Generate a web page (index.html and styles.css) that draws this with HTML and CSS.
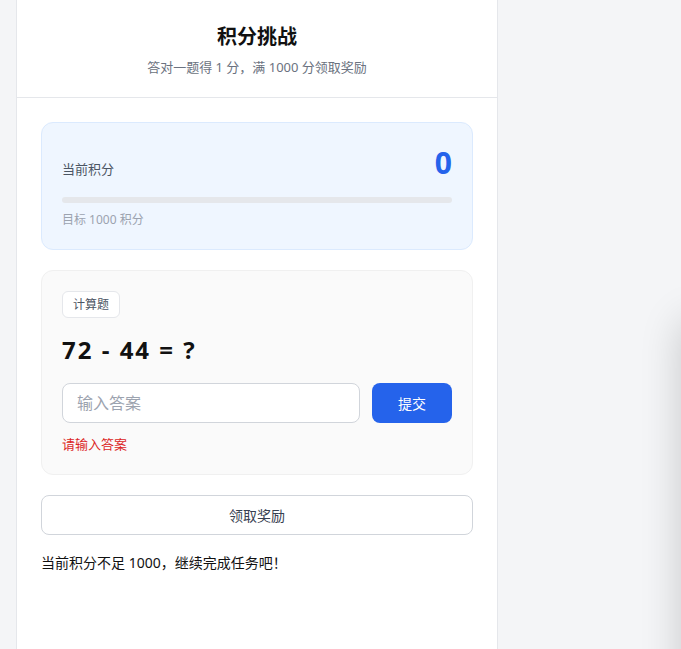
FILE: index.html
```html
<!DOCTYPE html>
<html lang="zh-CN">
<head>
  <meta charset="UTF-8" />
  <meta name="viewport" content="width=device-width, initial-scale=1.0"/>
  <title>积分挑战</title>
  <link rel="stylesheet" href="styles.css">
</head>
<body>
  <div class="app">
    <!-- Header -->
    <div class="header">
      <h1>积分挑战</h1>
      <p>答对一题得 1 分，满 1000 分领取奖励</p>
    </div>

    <div class="content">
      <!-- Score -->
      <div class="score-card">
        <div class="score-row">
          <span class="score-label">当前积分</span>
          <span class="score-value">0</span>
        </div>
        <div class="progress"><div class="progress-bar" style="width: 0%"></div></div>
        <div class="score-goal">目标 1000 积分</div>
      </div>

      <!-- Question -->
      <div class="question-card">
        <span class="tag">计算题</span>
        <div class="equation">72 - 44 = ?</div>
        <div class="answer-row">
          <input type="text" class="answer-input" placeholder="输入答案"/>
          <button class="submit-btn">提交</button>
        </div>
        <div class="error">请输入答案</div>
      </div>

      <button class="claim-btn">领取奖励</button>
      <p class="message">当前积分不足 1000，继续完成任务吧！</p>
    </div>
  </div>

  <!-- toast sitting just off screen -->
  <div class="toast"></div>
</body>
</html>
```

FILE: styles.css
```css
body {
  font-family: "Noto Sans", "Noto Sans CJK SC", sans-serif;
  margin: 0;
  padding: 0 0 0 16px;
  background: #f4f5f7;
  color: #111827;
  min-height: 100vh;
  overflow: hidden;
}

.app {
  width: 480px;
  min-height: 100vh;
  background: #fff;
  border-left: 1px solid #e5e7eb;
  border-right: 1px solid #e5e7eb;
}

/* Header */
.header {
  text-align: center;
  padding: 23px 24px 20px;
  border-bottom: 1px solid #e5e7eb;
}
.header h1 {
  margin: 0 0 6px;
  font-size: 20px;
  line-height: 28px;
  font-weight: 700;
  color: #111;
}
.header p {
  margin: 0;
  font-size: 13px;
  line-height: 20px;
  color: #6b7280;
}

.content {
  padding: 24px 24px;
  display: flex;
  flex-direction: column;
}

/* Score Card */
.score-card {
  background: #eff6ff;
  border: 1px solid #dbeafe;
  border-radius: 12px;
  padding: 20px;
}
.score-row {
  display: flex;
  justify-content: space-between;
  align-items: baseline;
}
.score-label {
  font-size: 13px;
  color: #4b5563;
}
.score-value {
  font-size: 30px;
  line-height: 40px;
  font-weight: 700;
  color: #2563eb;
}
.progress {
  margin-top: 14px;
  height: 6px;
  border-radius: 3px;
  background: #e5e7eb;
  overflow: hidden;
}
.progress-bar {
  height: 100%;
  background: #2563eb;
}
.score-goal {
  margin-top: 8px;
  font-size: 12px;
  line-height: 18px;
  color: #9ca3af;
}

/* Question Card */
.question-card {
  margin-top: 20px;
  background: #fafafa;
  border: 1px solid #f0f0f0;
  border-radius: 12px;
  padding: 20px;
  display: flex;
  flex-direction: column;
  align-items: flex-start;
}
.tag {
  display: inline-block;
  padding: 4px 10px;
  font-size: 12px;
  line-height: 17px;
  color: #4b5563;
  background: #fff;
  border: 1px solid #e5e7eb;
  border-radius: 6px;
}
.equation {
  margin-top: 16px;
  font-family: "Open Sans", sans-serif;
  font-size: 24px;
  line-height: 32px;
  font-weight: 700;
  letter-spacing: 2px;
  color: #111;
}
.answer-row {
  margin-top: 17px;
  display: flex;
  gap: 12px;
  width: 100%;
}
.answer-input {
  flex: 1;
  height: 40px;
  box-sizing: border-box;
  padding: 0 14px;
  font-family: inherit;
  font-size: 16px;
  border: 1px solid #d1d5db;
  border-radius: 8px;
  background: #fff;
  outline: none;
}
.answer-input::placeholder {
  color: #9ca3af;
}
.submit-btn {
  width: 80px;
  height: 40px;
  border: none;
  border-radius: 8px;
  background: #2563eb;
  color: #fff;
  font-family: inherit;
  font-size: 14px;
  cursor: pointer;
}
.error {
  margin-top: 12px;
  font-size: 13px;
  line-height: 19px;
  color: #dc2626;
}

/* Claim */
.claim-btn {
  margin-top: 20px;
  height: 40px;
  border: 1px solid #d1d5db;
  border-radius: 8px;
  background: #fff;
  color: #374151;
  font-family: inherit;
  font-size: 14px;
  cursor: pointer;
}
.message {
  margin: 18px 0 0;
  font-size: 14px;
  line-height: 20px;
  color: #111;
}

/* Toast parked off to the right, only its shadow shows */
.toast {
  position: fixed;
  top: 310px;
  left: 100%;
  width: 300px;
  height: 400px;
  border-radius: 12px;
  background: #fff;
  box-shadow: 0 10px 40px rgba(0, 0, 0, 0.18);
}
```
